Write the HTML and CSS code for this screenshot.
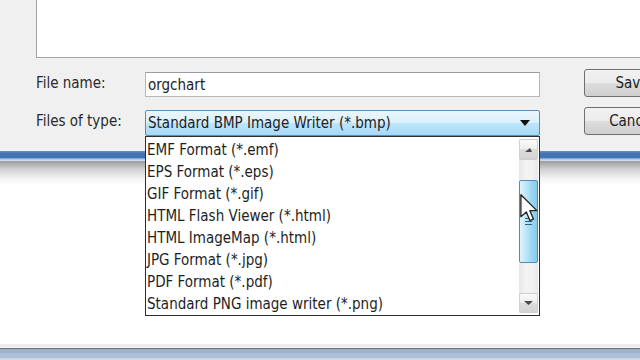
FILE: index.html
```html
<!DOCTYPE html>
<html lang="en">
<head>
    <meta charset="UTF-8">
    <meta name="viewport" content="width=device-width, initial-scale=1.0">
    <title>Save As</title>
    <link rel="stylesheet" href="styles.css">
</head>
<body>
    <div class="screen">
        <div class="dialog">
            <div class="file-pane"></div>
            <div class="row">
                <div class="label">File name:</div>
                <div class="field input">orgchart</div>
                <button class="btn">Save</button>
            </div>
            <div class="row">
                <div class="label">Files of type:</div>
                <div class="field select">
                    <span>Standard BMP Image Writer (*.bmp)</span>
                    <svg class="select-arrow" width="10" height="6" viewBox="0 0 10 6"><path d="M0 0H10L5 6Z" fill="#111"/></svg>
                    <!-- open list of the combo box -->
                    <div class="dropdown">
                        <ul class="list">
                            <li>EMF Format (*.emf)</li>
                            <li>EPS Format (*.eps)</li>
                            <li>GIF Format (*.gif)</li>
                            <li>HTML Flash Viewer (*.html)</li>
                            <li>HTML ImageMap (*.html)</li>
                            <li>JPG Format (*.jpg)</li>
                            <li>PDF Format (*.pdf)</li>
                            <li>Standard PNG image writer (*.png)</li>
                        </ul>
                        <div class="scroll">
                            <div class="sb-btn">
                                <svg width="7" height="4" viewBox="0 0 7 4"><path d="M0 4L5 0L7 4Z" fill="#4a4a4a"/></svg>
                            </div>
                            <div class="sb-gap1"></div>
                            <div class="thumb">
                                <div class="grip"></div>
                            </div>
                            <div class="sb-gap2"></div>
                            <div class="sb-btn">
                                <svg width="9" height="4" viewBox="0 0 9 4"><path d="M0 0H9L4.5 4Z" fill="#4a4a4a"/></svg>
                            </div>
                        </div>
                    </div>
                </div>
                <button class="btn">Cancel</button>
            </div>
        </div>
        <div class="bar"></div>
        <div class="shadow"></div>
        <div class="blank"></div>
        <div class="taskbar"></div>
        <svg class="cursor" width="18" height="28" viewBox="0 0 12 19">
            <path d="M0.5 0.5V15.5L4.2 12.2L6.6 18L9 17L6.6 11.3H11.3Z" fill="#fff" stroke="#222" stroke-width="0.9" stroke-linejoin="round"/>
        </svg>
    </div>
</body>
</html>
```

FILE: styles.css
```css
body {
    margin: 0;
    font-family: "DejaVu Sans Condensed", "DejaVu Sans", sans-serif;
    font-stretch: condensed;
    font-size: 15px;
    color: #222;
    overflow: hidden;
}

.screen {
    position: relative;
    width: 640px;
    height: 360px;
    display: flex;
    flex-direction: column;
    overflow: hidden;
    background: #fff;
}

.dialog {
    height: 151px;
    background: #f0f0f0;
    flex-shrink: 0;
}

.file-pane {
    margin-left: 36px;
    height: 57px;
    background: #fff;
    border-left: 1px solid #a3a3a3;
    border-bottom: 1px solid #a3a3a3;
}

.row {
    display: flex;
    align-items: flex-start;
    padding-left: 36px;
    margin-top: 11px;
    height: 28px;
}

.row + .row {
    margin-top: 10px;
}

.label {
    width: 109px;
    flex-shrink: 0;
    line-height: 28px;
    color: #2a2a2a;
}

.field {
    box-sizing: border-box;
    width: 395px;
    flex-shrink: 0;
    margin-top: 3px;
    padding-left: 2px;
}

.input {
    height: 25px;
    line-height: 24px;
    background: #fff;
    border: 1px solid #b5b7bc;
    border-top-color: #9a9ca2;
}

.select {
    position: relative;
    height: 26px;
    line-height: 24px;
    border: 1px solid #5a8db8;
    border-radius: 2px;
    background: linear-gradient(#eaf6fd, #d9f0fc 50%, #bee6fd 50%, #a7d9f5);
    display: flex;
    justify-content: space-between;
    align-items: center;
    padding-right: 9px;
}

.select-arrow {
    display: block;
}

.btn {
    box-sizing: border-box;
    width: 96px;
    height: 28px;
    margin-left: 44px;
    border: 1px solid #707070;
    border-radius: 3px;
    background: linear-gradient(#f2f2f2, #ebebeb 50%, #dddddd 50%, #cfcfcf);
    font: inherit;
    color: #222;
    padding: 0;
    flex-shrink: 0;
}

.dropdown {
    position: absolute;
    z-index: 10;
    top: 25px;
    left: -1px;
    box-sizing: border-box;
    width: 395px;
    height: 180px;
    border: 1px solid #2e2e2e;
    background: #fff;
    display: flex;
}

.list {
    flex: 1;
    margin: 0;
    padding: 2px 0 0 1px;
    list-style: none;
}

.list li {
    height: 22px;
    line-height: 22px;
    white-space: nowrap;
    color: #1e1e1e;
}

.scroll {
    width: 19px;
    margin: 2px 1px 2px 0;
    display: flex;
    flex-direction: column;
    background: linear-gradient(to right, #e6e6e6, #f2f2f2 30%, #f2f2f2 70%, #e8e8e8);
}

.sb-btn {
    box-sizing: border-box;
    height: 21px;
    border: 1px solid #cfcfcf;
    border-radius: 2px;
    background: linear-gradient(#fbfbfb, #ececec 50%, #dcdcdc 50%, #d4d4d4);
    display: flex;
    align-items: center;
    justify-content: center;
}

.sb-btn:last-child {
    height: 20px;
}

.sb-gap1 {
    height: 20px;
}

.thumb {
    box-sizing: border-box;
    height: 83px;
    border: 1px solid #4f8bbd;
    border-radius: 2px;
    background: linear-gradient(to right, #e0f3fc, #bfe6f8 35%, #9fd8f3 65%, #86cbee);
    display: flex;
    align-items: center;
    justify-content: center;
}

.grip {
    width: 7px;
    height: 7px;
    background: repeating-linear-gradient(#2f5f86 0 1px, transparent 1px 3px);
}

.sb-gap2 {
    height: 30px;
}

.bar {
    height: 10px;
    flex-shrink: 0;
    background: linear-gradient(#6a8fc4, #4173b5 25%, #4173b5 65%, #a8c2e4 80%, #dae5f2);
}

.shadow {
    height: 24px;
    flex-shrink: 0;
    background: linear-gradient(#9c9c9c, #d2d2d2 35%, #f4f4f4 75%, #fff);
}

.blank {
    flex: 1;
}

.taskbar {
    height: 16px;
    flex-shrink: 0;
    background: linear-gradient(#ececec 0 3px, #f6f6f6 3px 4px, #69717e 4px 5px, #9fb0c9 5px 9px, #aebed6 9px 14px, #cdd8e6 14px);
}

.cursor {
    position: absolute;
    left: 520px;
    top: 194px;
    z-index: 20;
}
```
